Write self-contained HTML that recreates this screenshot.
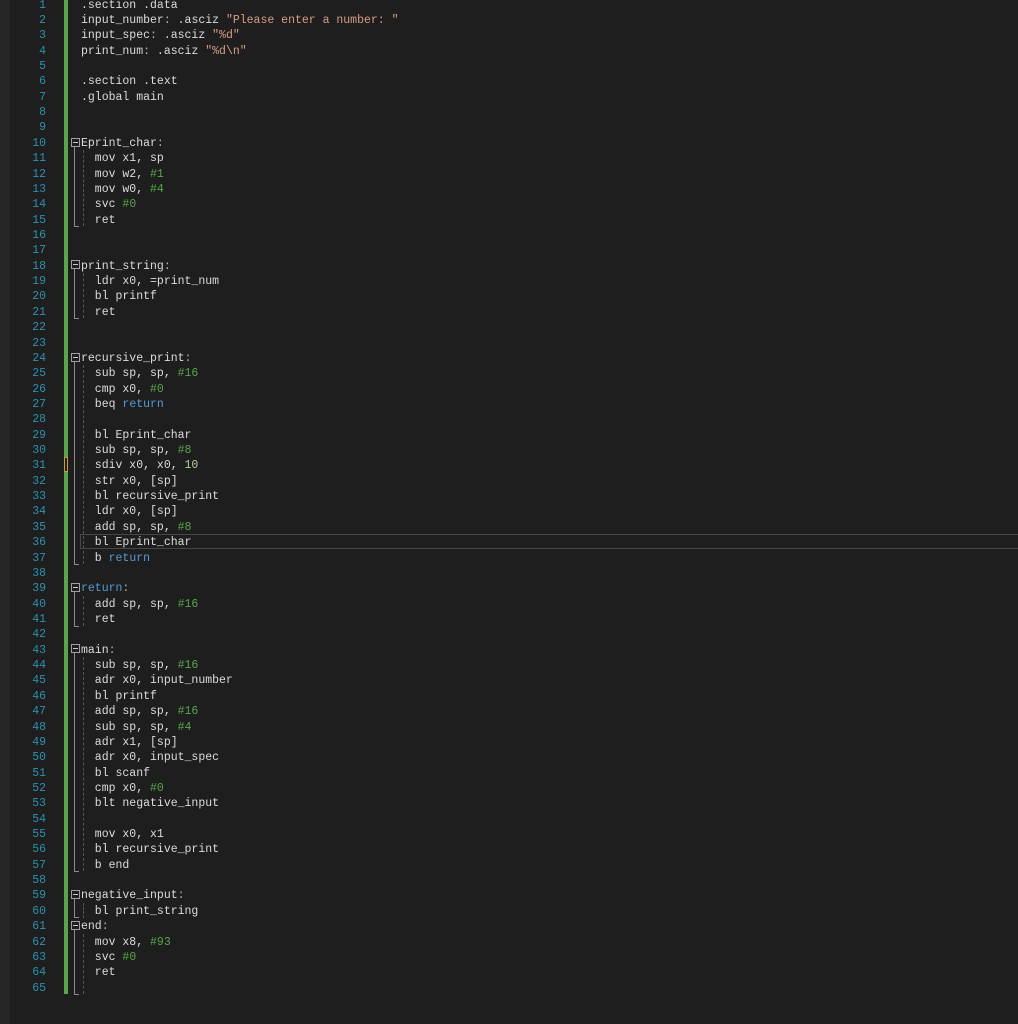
<!DOCTYPE html>
<html><head><meta charset="utf-8"><style>
html,body{margin:0;padding:0;}
body{width:1018px;height:1024px;background:#1e1e1e;position:relative;overflow:hidden;font-family:"Liberation Mono",monospace;font-size:11.5px;}
.strip{position:absolute;left:0;top:0;width:10px;height:1024px;background:#262626;}
.nums{position:absolute;left:0;top:-2.4px;width:46px;text-align:right;color:#2b91af;line-height:15.36px;}
.code{position:absolute;left:81px;top:-2.4px;color:#dcdcdc;line-height:15.36px;}
.code div{white-space:pre;}
.code div,.nums div{height:15.36px;}
.s{color:#d69d85}.n{color:#57a64a}.k{color:#569cd6}.p{color:#b4b4b4}.m{color:#b5cea8}
.bar{position:absolute;left:64px;width:4px;background:#57a64a;}
.box{position:absolute;left:71px;width:7px;height:7px;border:1px solid #a0a0a0;}
.box:after{content:"";position:absolute;left:1px;top:3px;width:5px;height:1px;background:#c8c8c8;}
.vl{position:absolute;left:74px;width:1px;background:#8a8a8a;}
.tk{position:absolute;left:74px;width:5px;height:1px;background:#8a8a8a;}
.dl{position:absolute;left:83px;width:0;border-left:1px dashed #555;}
.cur{position:absolute;left:80px;width:940px;height:13px;border:1px solid #464646;top:533.9px;}
</style></head><body>
<div class="strip"></div>
<div class="bar" style="top:0;height:456.9px"></div>
<div class="bar" style="top:456.9px;height:15.36px;background:#1e1e1e;border:1px solid #c8a030;box-sizing:border-box;"></div>
<div class="bar" style="top:472.3px;height:522px"></div>
<div class="cur"></div>

<div class="box" style="top:137.5px"></div><div class="vl" style="top:146.5px;height:80px"></div><div class="tk" style="top:226px"></div>
<div class="dl" style="top:150px;height:76px"></div>
<div class="box" style="top:260.4px"></div><div class="vl" style="top:269.4px;height:49px"></div><div class="tk" style="top:318px"></div>
<div class="dl" style="top:273px;height:45px"></div>
<div class="box" style="top:352.6px"></div><div class="vl" style="top:361.6px;height:203px"></div><div class="tk" style="top:564px"></div>
<div class="dl" style="top:365px;height:199px"></div>
<div class="box" style="top:583px"></div><div class="vl" style="top:592px;height:34px"></div><div class="tk" style="top:625.5px"></div>
<div class="dl" style="top:596px;height:30px"></div>
<div class="box" style="top:644.4px"></div><div class="vl" style="top:653.4px;height:218px"></div><div class="tk" style="top:871.3px"></div>
<div class="dl" style="top:657px;height:214px"></div>
<div class="box" style="top:890.2px"></div><div class="vl" style="top:899.2px;height:18px"></div><div class="tk" style="top:917.4px"></div>
<div class="dl" style="top:903px;height:15px"></div>
<div class="box" style="top:920.9px"></div><div class="vl" style="top:929.9px;height:64px"></div><div class="tk" style="top:994px"></div>
<div class="dl" style="top:934px;height:60px"></div>

<div class="nums">
<div>1</div><div>2</div><div>3</div><div>4</div><div>5</div><div>6</div><div>7</div><div>8</div><div>9</div><div>10</div>
<div>11</div><div>12</div><div>13</div><div>14</div><div>15</div><div>16</div><div>17</div><div>18</div><div>19</div><div>20</div>
<div>21</div><div>22</div><div>23</div><div>24</div><div>25</div><div>26</div><div>27</div><div>28</div><div>29</div><div>30</div>
<div>31</div><div>32</div><div>33</div><div>34</div><div>35</div><div>36</div><div>37</div><div>38</div><div>39</div><div>40</div>
<div>41</div><div>42</div><div>43</div><div>44</div><div>45</div><div>46</div><div>47</div><div>48</div><div>49</div><div>50</div>
<div>51</div><div>52</div><div>53</div><div>54</div><div>55</div><div>56</div><div>57</div><div>58</div><div>59</div><div>60</div>
<div>61</div><div>62</div><div>63</div><div>64</div><div>65</div>
</div>
<div class="code">
<div>.section .data</div>
<div>input_number<span class="p">:</span> .asciz <span class="s">"Please enter a number: "</span></div>
<div>input_spec<span class="p">:</span> .asciz <span class="s">"%d"</span></div>
<div>print_num<span class="p">:</span> .asciz <span class="s">"%d\n"</span></div>
<div> </div>
<div>.section .text</div>
<div>.global main</div>
<div> </div>
<div> </div>
<div>Eprint_char<span class="p">:</span></div>
<div>  mov x1, sp</div>
<div>  mov w2, <span class="n">#1</span></div>
<div>  mov w0, <span class="n">#4</span></div>
<div>  svc <span class="n">#0</span></div>
<div>  ret</div>
<div> </div>
<div> </div>
<div>print_string<span class="p">:</span></div>
<div>  ldr x0, =print_num</div>
<div>  bl printf</div>
<div>  ret</div>
<div> </div>
<div> </div>
<div>recursive_print<span class="p">:</span></div>
<div>  sub sp, sp, <span class="n">#16</span></div>
<div>  cmp x0, <span class="n">#0</span></div>
<div>  beq <span class="k">return</span></div>
<div> </div>
<div>  bl Eprint_char</div>
<div>  sub sp, sp, <span class="n">#8</span></div>
<div>  sdiv x0, x0, <span class="m">10</span></div>
<div>  str x0, [sp]</div>
<div>  bl recursive_print</div>
<div>  ldr x0, [sp]</div>
<div>  add sp, sp, <span class="n">#8</span></div>
<div>  bl Eprint_char</div>
<div>  b <span class="k">return</span></div>
<div> </div>
<div><span class="k">return</span><span class="p">:</span></div>
<div>  add sp, sp, <span class="n">#16</span></div>
<div>  ret</div>
<div> </div>
<div>main<span class="p">:</span></div>
<div>  sub sp, sp, <span class="n">#16</span></div>
<div>  adr x0, input_number</div>
<div>  bl printf</div>
<div>  add sp, sp, <span class="n">#16</span></div>
<div>  sub sp, sp, <span class="n">#4</span></div>
<div>  adr x1, [sp]</div>
<div>  adr x0, input_spec</div>
<div>  bl scanf</div>
<div>  cmp x0, <span class="n">#0</span></div>
<div>  blt negative_input</div>
<div> </div>
<div>  mov x0, x1</div>
<div>  bl recursive_print</div>
<div>  b end</div>
<div> </div>
<div>negative_input<span class="p">:</span></div>
<div>  bl print_string</div>
<div>end<span class="p">:</span></div>
<div>  mov x8, <span class="n">#93</span></div>
<div>  svc <span class="n">#0</span></div>
<div>  ret</div>
<div> </div>
</div>
</body></html>
